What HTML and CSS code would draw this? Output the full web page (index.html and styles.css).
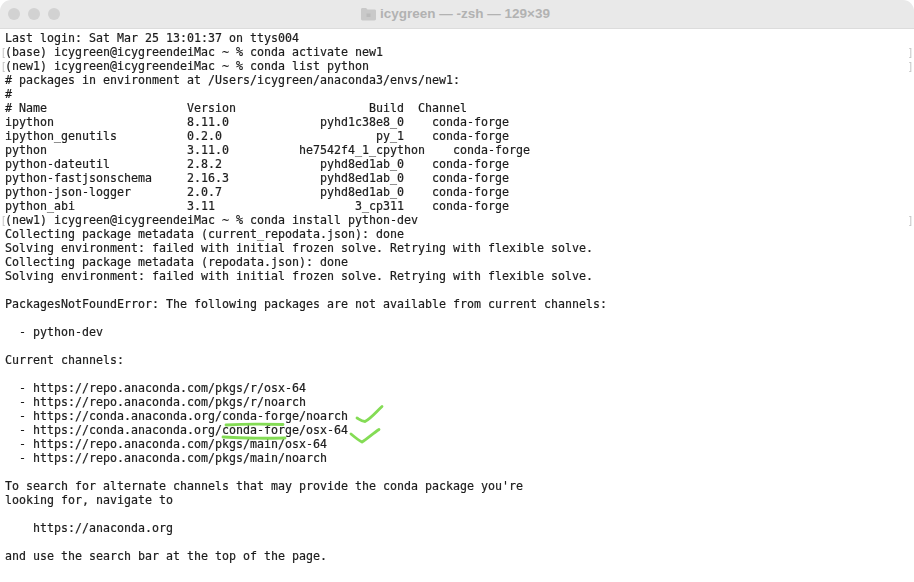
FILE: index.html
```html
<!DOCTYPE html>
<html lang="en">
<head>
<meta charset="utf-8">
<title>icygreen — -zsh — 129×39</title>
<link rel="stylesheet" href="styles.css">
</head>
<body>
<div class="window">
  <header class="titlebar">
    <div class="lights"><span class="light"></span><span class="light"></span><span class="light"></span></div>
    <div class="title">
      <svg class="folder" width="15" height="14" viewBox="0 0 15 14"><path d="M0 2.500C0 1.500.6 1 1.500 1h3.600l1.400 1.400h7c.9 0 1.500.6 1.500 1.400v8c0 1-.6 1.700-1.500 1.700h-12C.6 13.500 0 12.800 0 11.800z" fill="#c9c9c9"/><rect x="5.500" y="6.500" width="4" height="3.500" fill="#bbb"/></svg>
      <span>icygreen — -zsh — 129×39</span>
    </div>
  </header>
  <main class="terminal">
<div class="line">Last login: Sat Mar 25 13:01:37 on ttys004</div>
<div class="line"><i class="bl">[</i><i class="br">]</i>(base) icygreen@icygreendeiMac ~ % conda activate new1</div>
<div class="line"><i class="bl">[</i><i class="br">]</i>(new1) icygreen@icygreendeiMac ~ % conda list python</div>
<div class="line"># packages in environment at /Users/icygreen/anaconda3/envs/new1:</div>
<div class="line">#</div>
<div class="line"># Name                    Version                   Build  Channel</div>
<div class="line">ipython                   8.11.0             pyhd1c38e8_0    conda-forge</div>
<div class="line">ipython_genutils          0.2.0                      py_1    conda-forge</div>
<div class="line">python                    3.11.0          he7542f4_1_cpython    conda-forge</div>
<div class="line">python-dateutil           2.8.2              pyhd8ed1ab_0    conda-forge</div>
<div class="line">python-fastjsonschema     2.16.3             pyhd8ed1ab_0    conda-forge</div>
<div class="line">python-json-logger        2.0.7              pyhd8ed1ab_0    conda-forge</div>
<div class="line">python_abi                3.11                    3_cp311    conda-forge</div>
<div class="line"><i class="bl">[</i><i class="br">]</i>(new1) icygreen@icygreendeiMac ~ % conda install python-dev</div>
<div class="line">Collecting package metadata (current_repodata.json): done</div>
<div class="line">Solving environment: failed with initial frozen solve. Retrying with flexible solve.</div>
<div class="line">Collecting package metadata (repodata.json): done</div>
<div class="line">Solving environment: failed with initial frozen solve. Retrying with flexible solve.</div>
<div class="line"> </div>
<div class="line">PackagesNotFoundError: The following packages are not available from current channels:</div>
<div class="line"> </div>
<div class="line">  - python-dev</div>
<div class="line"> </div>
<div class="line">Current channels:</div>
<div class="line"> </div>
<div class="line">  - https://repo.anaconda.com/pkgs/r/osx-64</div>
<div class="line">  - https://repo.anaconda.com/pkgs/r/noarch</div>
<div class="line">  - https://conda.anaconda.org/conda-forge/noarch</div>
<div class="line">  - https://conda.anaconda.org/conda-forge/osx-64</div>
<div class="line">  - https://repo.anaconda.com/pkgs/main/osx-64</div>
<div class="line">  - https://repo.anaconda.com/pkgs/main/noarch</div>
<div class="line"> </div>
<div class="line">To search for alternate channels that may provide the conda package you're</div>
<div class="line">looking for, navigate to</div>
<div class="line"> </div>
<div class="line">    https://anaconda.org</div>
<div class="line"> </div>
<div class="line">and use the search bar at the top of the page.</div>
    <svg class="ink" width="914" height="582" viewBox="0 0 914 582">
      <g fill="none" stroke="#84dc55" stroke-linecap="round" stroke-linejoin="round">
        <path d="M357 418C359.500 419.500 362 421.500 365 421.500C371 418.500 376 412 382 406.500" stroke-width="2.800"/>
        <path d="M351 434C354 436.500 358 440 362 442C367 439 373 433.500 379 429.500" stroke-width="2.800"/>
        <path d="M226 425C244 424 262 423.800 283 424.500" stroke-width="2.800"/>
        <path d="M223 437C244 438.500 264 438.500 285 438" stroke-width="2.800"/>
      </g>
    </svg>
  </main>
</div>
</body>
</html>
```
FILE: styles.css
```css
* { box-sizing: border-box; }
html, body { margin: 0; height: 100%; background: #fff; overflow: hidden; }
.window { height: 582px; position: relative; filter: blur(0.3px); }
.titlebar {
  height: 29px;
  background: #e9e9e9;
  border-bottom: 1px solid #dcdcdc;
  border-radius: 11px 11px 0 0;
  display: flex;
  align-items: center;
  position: relative;
}
.lights { display: flex; gap: 8px; padding-left: 8px; }
.light { width: 12px; height: 12px; border-radius: 50%; background: #d2d2d2; }
.title {
  position: absolute;
  left: 361px;
  top: 6px;
  display: flex;
  align-items: center;
  gap: 4px;
  font: bold 13.5px/16px "Liberation Sans", Arial, sans-serif;
  color: #b2b2b2;
  white-space: nowrap;
}
.terminal {
  padding: 2px 0 0 5px;
  font-family: "DejaVu Sans Mono", Menlo, monospace;
  font-size: 11.63px;
  color: #1c1c1c;
  -webkit-text-stroke: 0.2px #1c1c1c;
}
.line { height: 14px; line-height: 14px; white-space: pre; position: relative; }
.bl, .br {
  position: absolute;
  top: 0;
  font: 11px/14px "Liberation Sans", Arial, sans-serif;
  color: #c4c4c4;
  -webkit-text-stroke: 0;
}
.bl { left: -3px; }
.br { left: 904px; }
.ink { position: absolute; left: 0; top: 0; pointer-events: none; }
```
